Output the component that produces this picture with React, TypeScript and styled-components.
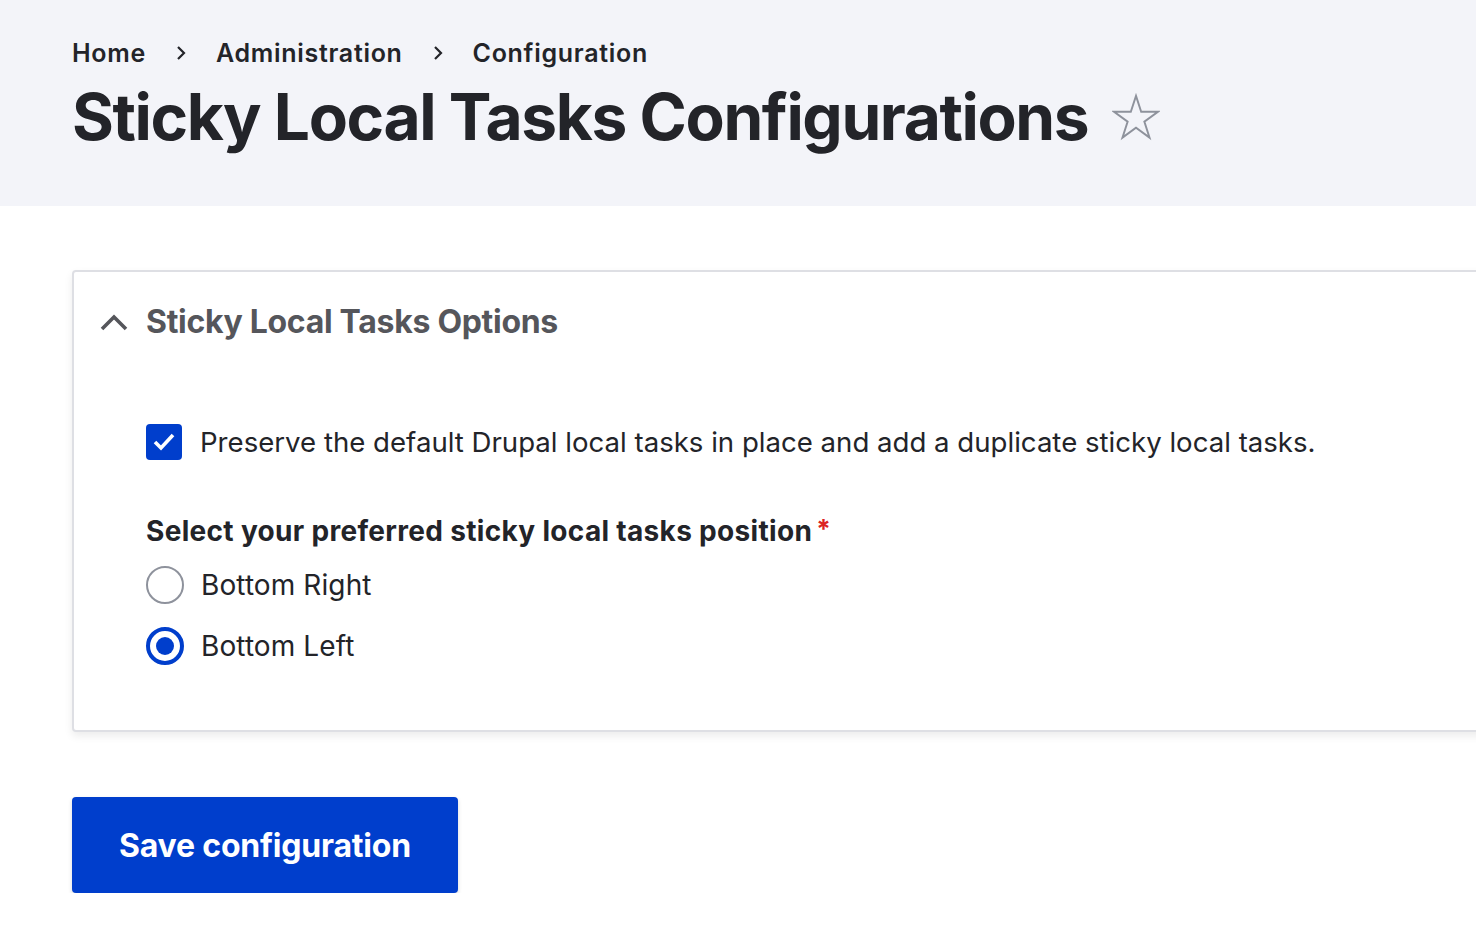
import React, { useState } from 'react';
import styled, { createGlobalStyle } from 'styled-components';

const GlobalStyle = createGlobalStyle`
    html, body {
        margin: 0;
        padding: 0;
        background: #fff;
        font-family: Inter, "Noto Sans", "Liberation Sans", sans-serif;
        color: #232429;
        overflow: hidden;
    }
    * { box-sizing: border-box; }
`;

const Header = styled.header`
    background: #f3f4f9;
    height: 206px;
    padding: 36px 72px 0;
`;

const Breadcrumb = styled.nav`
    display: flex;
    align-items: center;
    gap: 25px;
    font-size: 25px;
    font-weight: 600;
    letter-spacing: 0.7px;
    line-height: 34px;
    color: #232429;
`;

const Crumb = styled.a`
    color: inherit;
    text-decoration: none;
`;

const Sep = styled.span`
    display: inline-flex;
    width: 20px;
    justify-content: center;
`;

const TitleRow = styled.div`
    display: flex;
    align-items: center;
    gap: 24px;
    margin-top: 7px;
`;

const Title = styled.h1`
    margin: 0;
    font-size: 64px;
    font-weight: 700;
    letter-spacing: -1.4px;
    line-height: 80px;
    color: #232429;
`;

const StarButton = styled.button`
    border: 0;
    background: none;
    padding: 0;
    display: inline-flex;
    cursor: pointer;
`;

const Main = styled.main`
    padding: 64px 0 0 72px;
`;

const Details = styled.section`
    width: 1440px;
    border: 2px solid #dedfe4;
    border-radius: 4px;
    background: #fff;
    box-shadow: 0 4px 8px rgba(0, 0, 0, 0.08);
    padding-bottom: 54px;
`;

const Summary = styled.div`
    display: flex;
    align-items: flex-start;
    gap: 18px;
    padding: 30px 26px 0;
    height: 98px;
    font-size: 32px;
    font-weight: 700;
    color: #55565b;
    letter-spacing: -0.3px;
    line-height: 40px;
    cursor: pointer;
`;

const Body = styled.div`
    padding: 54px 72px 0;
    display: flex;
    flex-direction: column;
`;

const CheckRow = styled.label`
    display: flex;
    align-items: center;
    gap: 18px;
    font-size: 27.6px;
    line-height: 36px;
    color: #232429;
    cursor: pointer;
`;

const Box = styled.span<{ checked: boolean }>`
    width: 36px;
    height: 36px;
    border-radius: 4px;
    background: ${(p) => (p.checked ? '#003ecc' : '#fff')};
    border: ${(p) => (p.checked ? 'none' : '2px solid #8e929c')};
    display: inline-flex;
    align-items: center;
    justify-content: center;
    flex-shrink: 0;
`;

const Fieldset = styled.div`
    margin-top: 51px;
    display: flex;
    flex-direction: column;
`;

const Legend = styled.div`
    font-size: 28px;
    font-weight: 700;
    line-height: 36px;
    color: #232429;
    letter-spacing: 0.32px;
    margin-bottom: 5px;
`;

const Required = styled.span`
    color: #dc2323;
    font-size: 26px;
    vertical-align: 3px;
    margin-left: 4px;
`;

const RadioRow = styled.label`
    display: flex;
    align-items: center;
    gap: 17px;
    height: 61px;
    font-size: 28px;
    letter-spacing: 0.1px;
    color: #232429;
    cursor: pointer;
`;

const Radio = styled.span<{ checked: boolean }>`
    width: 38px;
    height: 38px;
    border-radius: 50%;
    border: ${(p) => (p.checked ? '4px solid #003ecc' : '2px solid #8e929c')};
    display: inline-flex;
    align-items: center;
    justify-content: center;
    flex-shrink: 0;
    &::after {
        content: '';
        display: ${(p) => (p.checked ? 'block' : 'none')};
        width: 18px;
        height: 18px;
        border-radius: 50%;
        background: #003ecc;
    }
`;

const SaveButton = styled.button`
    margin-top: 65px;
    width: 386px;
    height: 96px;
    border: 0;
    border-radius: 4px;
    background: #003ecc;
    color: #fff;
    font-family: inherit;
    font-size: 32px;
    font-weight: 700;
    letter-spacing: -0.2px;
    box-shadow: 0 2px 4px rgba(0, 0, 0, 0.15);
    cursor: pointer;
`;

const Chevron = () => (
    <svg width='28' height='40' viewBox='0 0 28 40'>
        <path d='M2 27 L14 15 L26 27' fill='none' stroke='#55565b' strokeWidth='3.6' />
    </svg>
);

const Arrow = () => (
    <svg width='12' height='16' viewBox='0 0 12 16'>
        <path d='M3 2 L9 8 L3 14' fill='none' stroke='#232429' strokeWidth='2.2' />
    </svg>
);

const Star = () => (
    <svg width='48' height='48' viewBox='0 0 50 50'>
        <path
            d='M25 3 L30.4 19.6 L47.8 19.6 L33.7 29.8 L39.1 46.5 L25 36.2 L10.9 46.5 L16.3 29.8 L2.2 19.6 L19.6 19.6 Z'
            fill='none'
            stroke='#8e929c'
            strokeWidth='2'
        />
    </svg>
);

export default function App(): JSX.Element {
    const [keep, setKeep] = useState(true);
    const [position, setPosition] = useState('left');

    return (
        <>
            <GlobalStyle />
            <Header>
                <Breadcrumb>
                    <Crumb href='#'>Home</Crumb>
                    <Sep><Arrow /></Sep>
                    <Crumb href='#'>Administration</Crumb>
                    <Sep><Arrow /></Sep>
                    <Crumb href='#'>Configuration</Crumb>
                </Breadcrumb>
                <TitleRow>
                    <Title>Sticky Local Tasks Configurations</Title>
                    <StarButton><Star /></StarButton>
                </TitleRow>
            </Header>
            <Main>
                <Details>
                    <Summary>
                        <Chevron />
                        <span>Sticky Local Tasks Options</span>
                    </Summary>
                    <Body>
                        <CheckRow onClick={() => setKeep(!keep)}>
                            <Box checked={keep}>
                                {keep && (
                                    <svg width='24' height='20' viewBox='0 0 24 20'>
                                        <path d='M3 10 L9 16 L21 3' fill='none' stroke='#fff' strokeWidth='3.6' />
                                    </svg>
                                )}
                            </Box>
                            Preserve the default Drupal local tasks in place and add a duplicate sticky local tasks.
                        </CheckRow>
                        <Fieldset>
                            <Legend>
                                Select your preferred sticky local tasks position
                                <Required>*</Required>
                            </Legend>
                            <RadioRow onClick={() => setPosition('right')}>
                                <Radio checked={position === 'right'} />
                                Bottom Right
                            </RadioRow>
                            <RadioRow onClick={() => setPosition('left')}>
                                <Radio checked={position === 'left'} />
                                Bottom Left
                            </RadioRow>
                        </Fieldset>
                    </Body>
                </Details>
                <SaveButton>Save configuration</SaveButton>
            </Main>
        </>
    );
}
